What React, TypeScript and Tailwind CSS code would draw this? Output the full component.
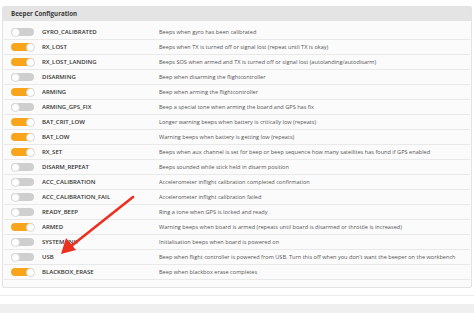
import React from "react";

const beepers: { name: string; desc: string; on: boolean }[] = [
  { name: "GYRO_CALIBRATED", desc: "Beeps when gyro has been calibrated", on: false },
  { name: "RX_LOST", desc: "Beeps when TX is turned off or signal lost (repeat until TX is okay)", on: true },
  { name: "RX_LOST_LANDING", desc: "Beeps SOS when armed and TX is turned off or signal lost (autolanding/autodisarm)", on: true },
  { name: "DISARMING", desc: "Beep when disarming the flightcontroller", on: false },
  { name: "ARMING", desc: "Beep when arming the flightcontroller", on: true },
  { name: "ARMING_GPS_FIX", desc: "Beep a special tone when arming the board and GPS has fix", on: false },
  { name: "BAT_CRIT_LOW", desc: "Longer warning beeps when battery is critically low (repeats)", on: true },
  { name: "BAT_LOW", desc: "Warning beeps when battery is getting low (repeats)", on: true },
  { name: "RX_SET", desc: "Beeps when aux channel is set for beep or beep sequence how many satellites has found if GPS enabled", on: true },
  { name: "DISARM_REPEAT", desc: "Beeps sounded while stick held in disarm position", on: false },
  { name: "ACC_CALIBRATION", desc: "Accelerometer inflight calibration completed confirmation", on: false },
  { name: "ACC_CALIBRATION_FAIL", desc: "Accelerometer inflight calibration failed", on: false },
  { name: "READY_BEEP", desc: "Ring a tone when GPS is locked and ready", on: false },
  { name: "ARMED", desc: "Warning beeps when board is armed (repeats until board is disarmed or throttle is increased)", on: true },
  { name: "SYSTEM_INIT", desc: "Initialisation beeps when board is powered on", on: false },
  { name: "USB", desc: "Beep when flight controller is powered from USB. Turn this off when you don't want the beeper on the workbench", on: false },
  { name: "BLACKBOX_ERASE", desc: "Beep when blackbox erase completes", on: true },
];

function Toggle({ on }: { on: boolean }) {
  return (
    <div
      className={`relative h-[8px] w-[23px] rounded-full ${on ? "bg-[#f9a51c]" : "bg-[#cfcfcf]"}`}
    >
      <div
        className={`absolute top-[-0.5px] h-[9px] w-[9px] rounded-full border border-[#d8d8d8] bg-white ${
          on ? "right-[-0.5px]" : "left-[-0.5px]"
        }`}
      />
    </div>
  );
}

export default function App() {
  return (
    <div
      className="relative h-[313px] w-[474px] overflow-hidden bg-white"
      style={{ fontFamily: '"Open Sans", "Liberation Sans", sans-serif' }}
    >
      <div className="px-[2px] pt-[6px]">
        <div className="rounded-[2px] border border-[#e3e3e3] bg-[#fbfbfb]">
          <div className="flex h-[14px] items-center bg-[#e4e4e4] pl-[8px] text-[6.2px] font-bold text-[#3a3a3a]">
            Beeper Configuration
          </div>
          <div className="px-[1px] pb-[7px] pt-[4px]">
            {beepers.map((b) => (
              <div key={b.name} className="flex h-[15px] items-center border-b border-[#e9e9e9]">
                <div className="flex w-[38px] shrink-0 justify-start pl-[7px]">
                  <Toggle on={b.on} />
                </div>
                <div className="w-[117px] shrink-0 whitespace-nowrap text-[6px] font-semibold text-[#333]">
                  {b.name}
                </div>
                <div className="whitespace-nowrap text-[5.6px] text-[#555]">{b.desc}</div>
              </div>
            ))}
          </div>
        </div>
      </div>
      <div className="mt-[7px] border-t border-[#ececec]" />
      <div className="mt-[8px] h-[20px] bg-[#efefef]" />

      <svg className="pointer-events-none absolute left-0 top-0" width="474" height="313">
        <line x1="133" y1="197" x2="70" y2="247" stroke="#ec2f1f" strokeWidth="2.6" strokeLinecap="round" />
        <polygon points="61,254 66,238 76,250" fill="#ec2f1f" />
      </svg>
    </div>
  );
}
